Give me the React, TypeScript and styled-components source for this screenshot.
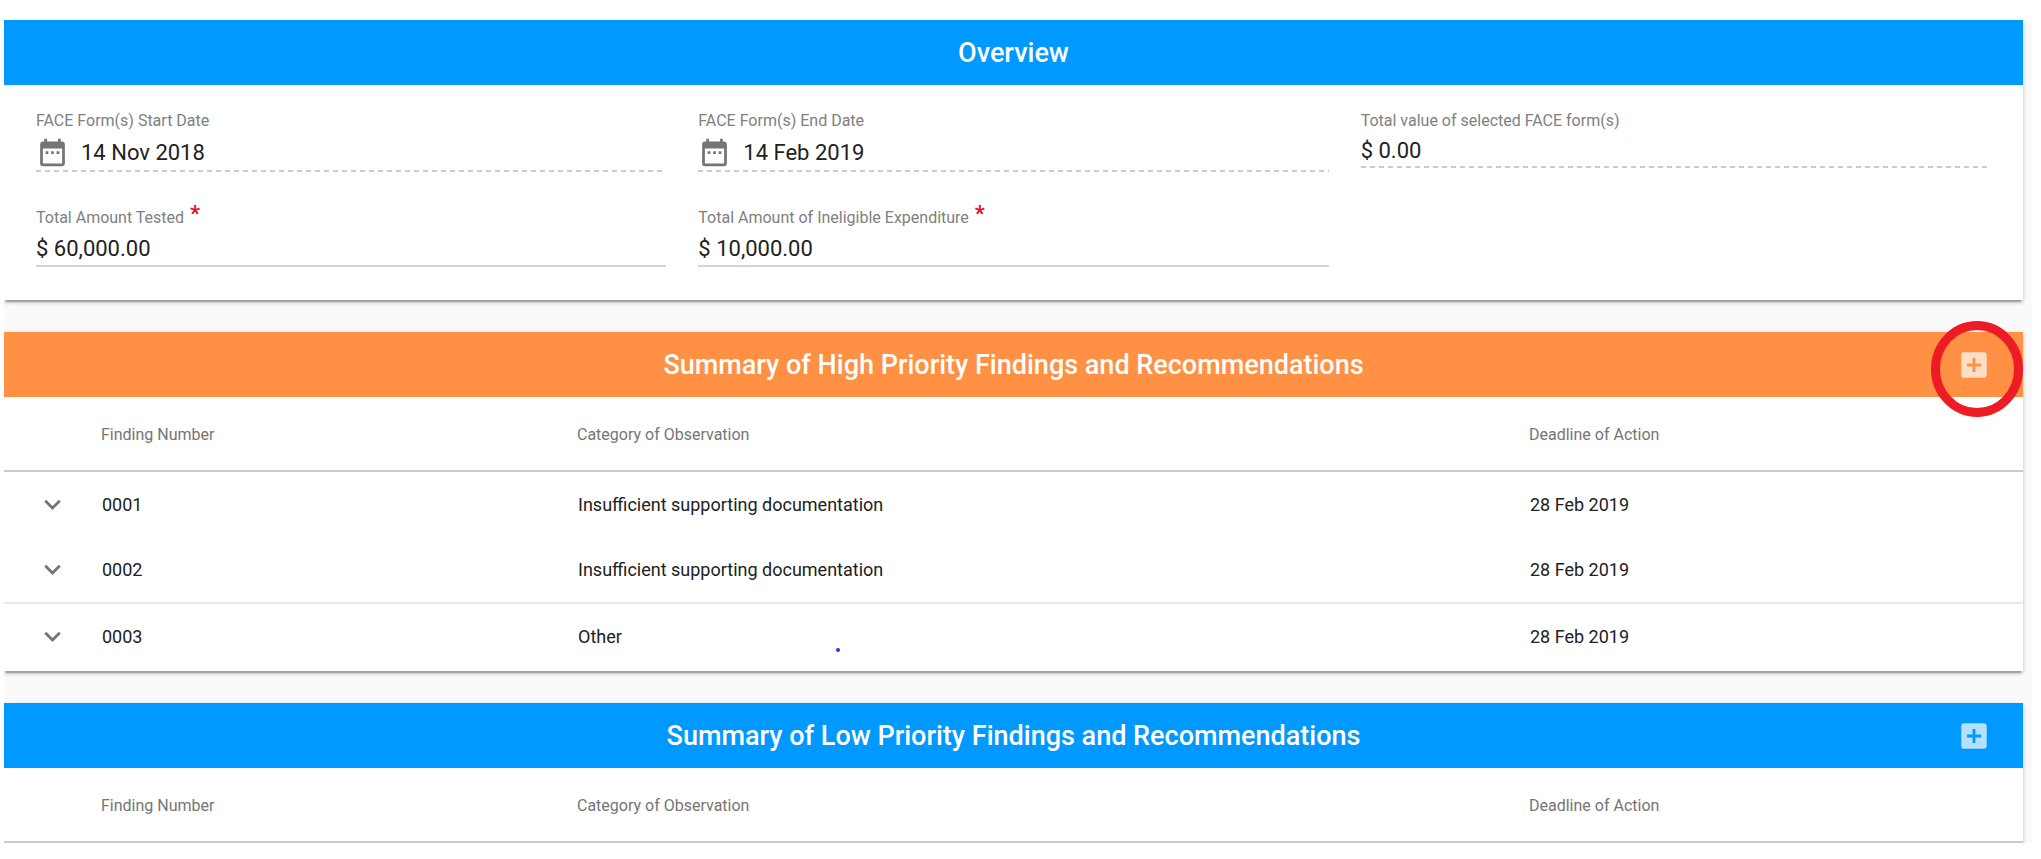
import React from "react";
import styled, { createGlobalStyle } from "styled-components";
import { MdAddBox, MdDateRange, MdExpandMore } from "react-icons/md";

const GlobalStyle = createGlobalStyle`
  *, *::before, *::after { box-sizing: border-box; }
  body {
    margin: 0;
    background: #fff;
    color: #212121;
    font-family: Roboto, "Liberation Sans", sans-serif;
  }
`;

const Page = styled.main`
  padding: 20px 9px 0 4px;
`;

const Stack = styled.div`
  display: flex;
  flex-direction: column;
  gap: 32px;
  padding-right: 9px;
  background: #fafafa;
  overflow: hidden;
`;

const Card = styled.section`
  position: relative;
  background: #fff;
  box-shadow:
    0 3px 3px rgba(0, 0, 0, 0.14),
    0 1px 6px rgba(0, 0, 0, 0.12),
    0 4px 1px -2px rgba(0, 0, 0, 0.2);
`;

const CardHeader = styled.header<{ $tone: "blue" | "orange" }>`
  display: grid;
  grid-template-columns: 1fr auto 1fr;
  align-items: center;
  height: 65px;
  padding: 0 32px;
  background: ${(p) => (p.$tone === "orange" ? "#ff9044" : "#0099ff")};
`;

const CardTitle = styled.h2`
  grid-column: 2;
  margin: 0;
  color: #fff;
  font-size: 27px;
  font-weight: 500;
  line-height: 32px;
`;

const AddButton = styled.button`
  display: flex;
  justify-self: end;
  padding: 0;
  border: 0;
  background: none;
  color: rgba(255, 255, 255, 0.7);
  font-size: 34px;
  cursor: pointer;
`;

const Fields = styled.div`
  display: grid;
  grid-template-columns: repeat(3, 1fr);
  align-items: start;
  gap: 34px 32px;
  padding: 24px 32px 33px;
`;

const Field = styled.div`
  display: flex;
  flex-direction: column;
`;

const FieldLabel = styled.label`
  height: 24px;
  color: #808080;
  font-size: 16px;
  line-height: 24px;
  white-space: nowrap;
`;

const Required = styled.span`
  margin-left: 6px;
  color: #e0141e;
  font-size: 22px;
  font-weight: 700;
  line-height: 16px;
  vertical-align: 2px;
`;

const lineHeights = { date: 39, computed: 35, editable: 37 };

const InputLine = styled.div<{ $kind: keyof typeof lineHeights }>`
  display: flex;
  align-items: center;
  gap: 12px;
  height: ${(p) => lineHeights[p.$kind]}px;
  background: ${(p) =>
      p.$kind === "editable"
        ? "linear-gradient(#d4d4d4, #d4d4d4)"
        : "repeating-linear-gradient(to right, #cccccc 0 5px, transparent 5px 9px)"}
    left bottom / 100% 2px no-repeat;

  svg {
    flex: none;
    color: #757575;
    font-size: 33px;
  }
`;

const TextInput = styled.input`
  flex: 1;
  min-width: 0;
  height: 32px;
  padding: 0;
  border: 0;
  outline: 0;
  background: none;
  color: #212121;
  font: 400 22px/32px Roboto, "Liberation Sans", sans-serif;
`;

const Table = styled.table`
  display: block;
  width: 100%;

  thead, tbody { display: block; }
`;

const Row = styled.tr<{ $kind: "head" | "plain" | "ruled" | "last" }>`
  display: grid;
  grid-template-columns: 97px 1fr 2fr 1fr;
  align-items: center;
  height: ${(p) => ({ head: "75px", plain: "65px", ruled: "67px", last: "67px" })[p.$kind]};
  padding-right: 18px;
  border-bottom: ${(p) =>
    ({ head: "2px solid #cbcbcb", plain: "0", ruled: "2px solid #e9e9e9", last: "2px solid #fff" })[p.$kind]};
`;

const HeadCell = styled.th`
  padding: 2px 0 0;
  color: #757575;
  font-size: 16px;
  font-weight: 400;
  line-height: 24px;
  text-align: left;
`;

const Cell = styled.td`
  padding: 0 0 0 1px;
  font-size: 18px;
  line-height: 24px;
`;

const ToggleButton = styled.button`
  display: flex;
  margin-left: 31px;
  padding: 0;
  border: 0;
  background: none;
  color: #757575;
  font-size: 33px;
  cursor: pointer;
`;

const Highlight = styled.svg`
  position: absolute;
  top: -11px;
  right: 0;
  width: 92px;
  height: 96px;
  pointer-events: none;
`;

const PenDot = styled.span`
  position: absolute;
  left: 832px;
  bottom: 19px;
  width: 4px;
  height: 4px;
  border-radius: 50%;
  background: #3a2ce0;
`;

type FieldProps = {
  id: string;
  label: string;
  value: string;
  kind: keyof typeof lineHeights;
};

function FormField({ id, label, value, kind }: FieldProps) {
  const editable = kind === "editable";
  return (
    <Field>
      <FieldLabel htmlFor={id}>
        {label}
        {editable && <Required>*</Required>}
      </FieldLabel>
      <InputLine $kind={kind}>
        {kind === "date" && <MdDateRange aria-hidden />}
        <TextInput id={id} defaultValue={value} readOnly={!editable} required={editable} />
      </InputLine>
    </Field>
  );
}

type Finding = { number: string; category: string; deadline: string };

const highFindings: Finding[] = [
  { number: "0001", category: "Insufficient supporting documentation", deadline: "28 Feb 2019" },
  { number: "0002", category: "Insufficient supporting documentation", deadline: "28 Feb 2019" },
  { number: "0003", category: "Other", deadline: "28 Feb 2019" },
];

function FindingsTable({ findings }: { findings: Finding[] }) {
  const kindOf = (i: number) => (i === findings.length - 1 ? "last" : i === 0 ? "plain" : "ruled");
  return (
    <Table>
      <thead>
        <Row $kind="head">
          <td />
          <HeadCell scope="col">Finding Number</HeadCell>
          <HeadCell scope="col">Category of Observation</HeadCell>
          <HeadCell scope="col">Deadline of Action</HeadCell>
        </Row>
      </thead>
      <tbody>
        {findings.map((f, i) => (
          <Row key={f.number} $kind={kindOf(i)}>
            <Cell>
              <ToggleButton type="button" aria-label={`Expand finding ${f.number}`}>
                <MdExpandMore />
              </ToggleButton>
            </Cell>
            <Cell>{f.number}</Cell>
            <Cell>{f.category}</Cell>
            <Cell>{f.deadline}</Cell>
          </Row>
        ))}
      </tbody>
    </Table>
  );
}

export default function App() {
  return (
    <>
      <GlobalStyle />
      <Page>
        <Stack>
          <Card>
            <CardHeader $tone="blue">
              <CardTitle>Overview</CardTitle>
            </CardHeader>
            <Fields>
              <FormField id="start" label="FACE Form(s) Start Date" value="14 Nov 2018" kind="date" />
              <FormField id="end" label="FACE Form(s) End Date" value="14 Feb 2019" kind="date" />
              <FormField id="total" label="Total value of selected FACE form(s)" value="$ 0.00" kind="computed" />
              <FormField id="tested" label="Total Amount Tested" value="$ 60,000.00" kind="editable" />
              <FormField
                id="ineligible"
                label="Total Amount of Ineligible Expenditure"
                value="$ 10,000.00"
                kind="editable"
              />
            </Fields>
          </Card>

          <Card>
            <CardHeader $tone="orange">
              <CardTitle>Summary of High Priority Findings and Recommendations</CardTitle>
              <AddButton type="button" aria-label="Add high priority finding">
                <MdAddBox />
              </AddButton>
            </CardHeader>
            <FindingsTable findings={highFindings} />
            <Highlight viewBox="0 0 92 96" aria-hidden>
              <ellipse cx="46" cy="48" rx="41.5" ry="43.5" fill="none" stroke="#ed1c24" strokeWidth="9" />
            </Highlight>
            <PenDot />
          </Card>

          <Card>
            <CardHeader $tone="blue">
              <CardTitle>Summary of Low Priority Findings and Recommendations</CardTitle>
              <AddButton type="button" aria-label="Add low priority finding">
                <MdAddBox />
              </AddButton>
            </CardHeader>
            <FindingsTable findings={[]} />
          </Card>
        </Stack>
      </Page>
    </>
  );
}
